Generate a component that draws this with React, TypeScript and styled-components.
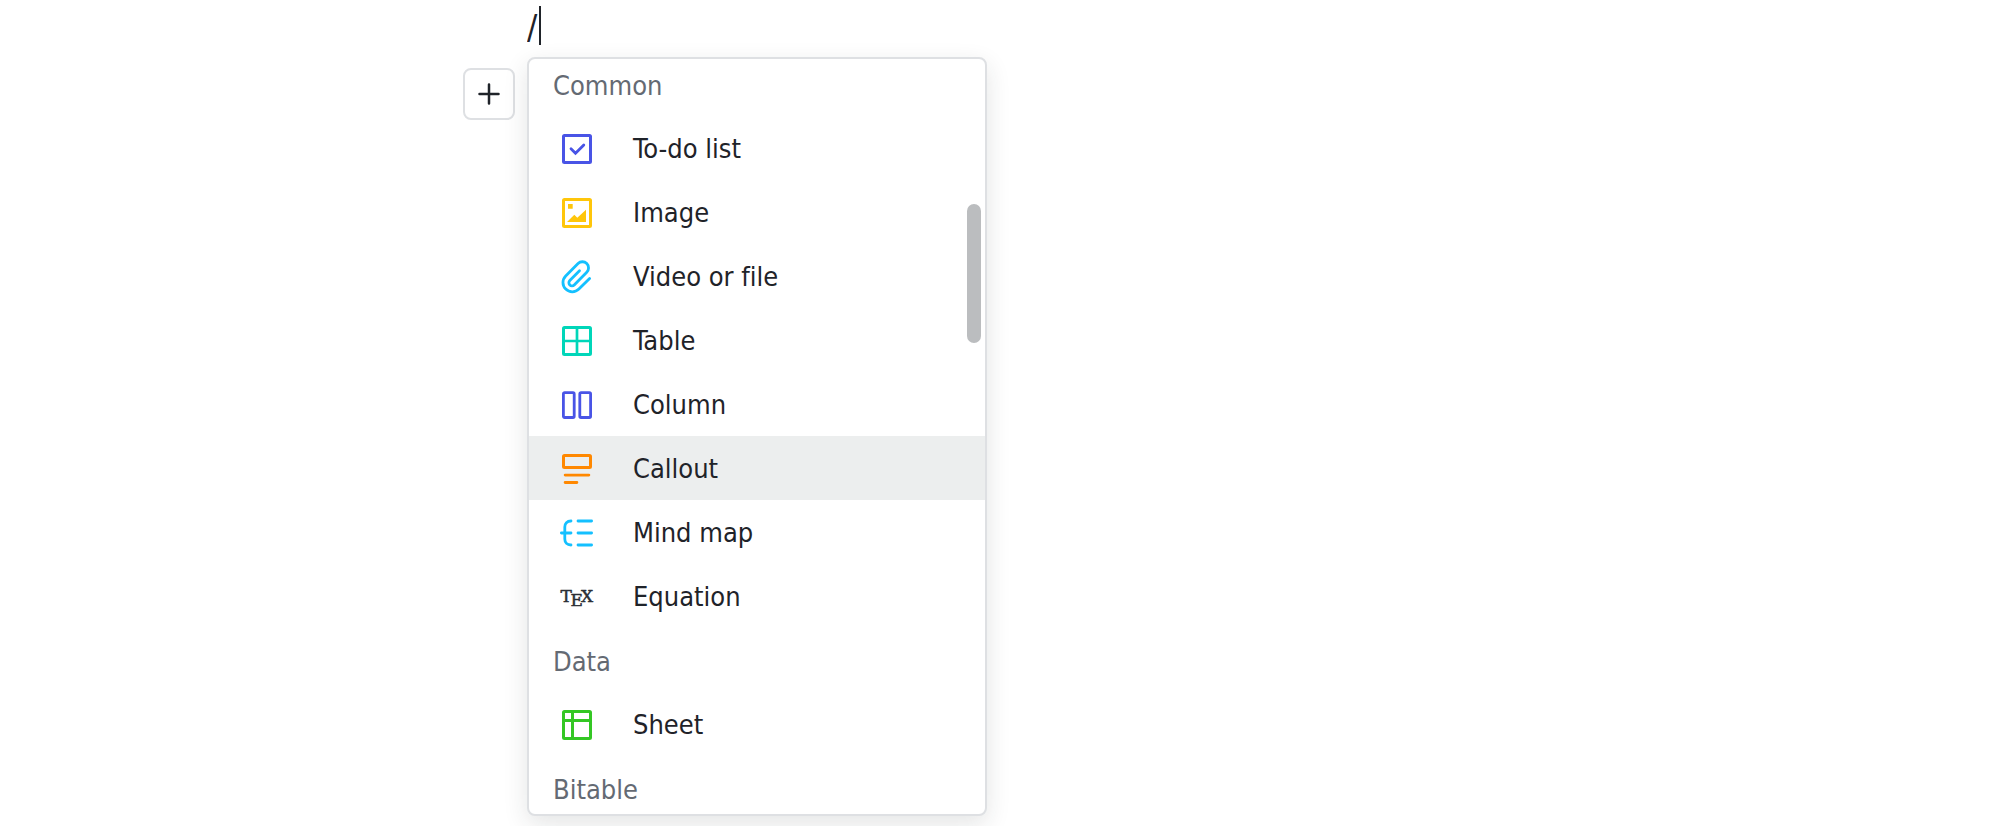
import React, { Fragment, type ReactNode } from 'react';
import styled, { createGlobalStyle } from 'styled-components';

const GlobalStyle = createGlobalStyle`
  *, *::before, *::after { box-sizing: border-box; }
  body {
    margin: 0;
    background: #fff;
    color: #1f2329;
    font-family: Tahoma, "DejaVu Sans Condensed", "Noto Sans", sans-serif;
    font-variant-ligatures: none;
  }
  button, input { font: inherit; color: inherit; }
`;

const Editor = styled.main`
  display: grid;
  grid-template-columns: 52px minmax(0, 1fr);
  column-gap: 12px;
  align-content: start;
  max-width: 1074px;
  min-height: 100vh;
  margin: 0 auto;
  padding-top: 6px;
`;

const Line = styled.div`
  grid-column: 2;
  display: flex;
  align-items: center;
  height: 39px;
  margin-bottom: 12px;
`;

const LineInput = styled.input`
  width: 12px;
  height: 39px;
  padding: 3px 0 0;
  border: 0;
  outline: 0;
  background: transparent;
  font-size: 34px;
  line-height: 36px;
  caret-color: transparent;
`;

const Caret = styled.span`
  width: 2px;
  height: 39px;
  background: #1f2329;
`;

const AddButton = styled.button`
  display: flex;
  align-items: center;
  justify-content: center;
  width: 52px;
  height: 52px;
  margin-top: 11px;
  padding: 0;
  border: 2px solid #dee0e3;
  border-radius: 8px;
  background: #fff;
`;

const Panel = styled.section`
  position: relative;
  width: 100%;
  max-width: 460px;
  height: calc(100vh - 67px);
  overflow: hidden;
  border: 2px solid #dee0e3;
  border-radius: 8px;
  background: #fff;
  box-shadow: 0 8px 24px rgba(31, 45, 41, 0.12);
`;

const List = styled.div`
  margin-top: -7px;
`;

const GroupTitle = styled.h2`
  height: 64px;
  margin: 0;
  padding: 2px 24px 0;
  color: #646a73;
  font-size: 27px;
  font-weight: 400;
  line-height: 64px;
`;

const Item = styled.button<{ $active?: boolean }>`
  display: flex;
  align-items: center;
  gap: 38px;
  width: 100%;
  height: 64px;
  padding: 2px 30px 0;
  border: 0;
  background: ${({ $active }) => ($active ? '#eceeee' : 'transparent')};
  font-size: 27px;
  line-height: 64px;
  text-align: left;
`;

const ScrollThumb = styled.div`
  position: absolute;
  top: 145px;
  right: 4px;
  width: 14px;
  height: 139px;
  border-radius: 7px;
  background: #bbbdbf;
`;

const Glyph = styled.svg`
  flex: none;
  width: 36px;
  height: 36px;
  fill: none;
  stroke: currentColor;
  stroke-width: 3;
  stroke-linecap: round;
  stroke-linejoin: round;
`;

const Icon = ({ color, children }: { color: string; children: ReactNode }) => (
  <Glyph viewBox="0 0 36 36" color={color} aria-hidden="true">
    {children}
  </Glyph>
);

const frame = <rect x="4.5" y="4.5" width="27" height="27" rx="1" />;

const icons = {
  todo: (
    <Icon color="#4954e6">
      {frame}
      <path d="M12 17.8l4.5 4.5 8.3-8.3" strokeLinejoin="miter" strokeWidth="2.8" />
    </Icon>
  ),
  image: (
    <Icon color="#ffc60a">
      {frame}
      <path d="M9 9h4.7v4.7H9zM8 27l7.3-7.3 3 3L27 14.8V27z" fill="currentColor" stroke="none" />
    </Icon>
  ),
  file: (
    <Icon color="#14c0ff">
      <path
        strokeWidth="2.8"
        d="M30.6 19.4L19.9 30.1A9.33 9.33 0 0 1 6.7 16.9L19.05 4.55A6.15 6.15 0 0 1 27.75 13.25L15.2 25.9A3.11 3.11 0 0 1 10.8 21.5L20.5 11.8"
      />
    </Icon>
  ),
  table: (
    <Icon color="#00d6b9">
      {frame}
      <path d="M18 5v26M5 18h26" strokeWidth="2.7" />
    </Icon>
  ),
  column: (
    <Icon color="#4954e6">
      <rect x="4.4" y="5.7" width="10.8" height="24.8" rx="1.2" strokeWidth="2.8" />
      <rect x="20.8" y="5.7" width="10.8" height="24.8" rx="1.2" strokeWidth="2.8" />
    </Icon>
  ),
  callout: (
    <Icon color="#ff8800">
      <rect x="4.5" y="4.5" width="27" height="12" rx="1" />
      <path d="M6.1 24.1h23.8M6.1 31.5h11.8" strokeWidth="2.8" />
    </Icon>
  ),
  mindmap: (
    <Icon color="#14c0ff">
      <path
        strokeWidth="2.8"
        d="M12 6C8 6 5.8 8.5 5.8 12v12c0 3.5 2.2 6 6.2 6M2.4 18H12M19 6h13.6M19 18h13.6M19 30h13.6"
      />
    </Icon>
  ),
  equation: (
    <Icon color="#2b2f36">
      <g fill="currentColor" strokeWidth="0.5" fontFamily="'DejaVu Serif', serif" fontSize="17">
        <text x="1.5" y="23">T</text>
        <text x="11.5" y="26.5">E</text>
        <text x="22" y="23">X</text>
      </g>
    </Icon>
  ),
  sheet: (
    <Icon color="#34c724">
      {frame}
      <path d="M13.5 5v26M5 13.5h26" />
    </Icon>
  ),
};

type Entry = { icon: keyof typeof icons; label: string };

const groups: { title: string; items: Entry[] }[] = [
  {
    title: 'Common',
    items: [
      { icon: 'todo', label: 'To-do list' },
      { icon: 'image', label: 'Image' },
      { icon: 'file', label: 'Video or file' },
      { icon: 'table', label: 'Table' },
      { icon: 'column', label: 'Column' },
      { icon: 'callout', label: 'Callout' },
      { icon: 'mindmap', label: 'Mind map' },
      { icon: 'equation', label: 'Equation' },
    ],
  },
  { title: 'Data', items: [{ icon: 'sheet', label: 'Sheet' }] },
  { title: 'Bitable', items: [] },
];

export default function App() {
  return (
    <>
      <GlobalStyle />
      <Editor>
        <Line>
          <LineInput aria-label="Command" defaultValue="/" />
          <Caret />
        </Line>
        <AddButton aria-label="Add block">
          <svg width="24" height="24" viewBox="0 0 24 24" stroke="#1f2329" strokeWidth="2.5" strokeLinecap="round" aria-hidden="true">
            <path d="M12 2.5v19M2.5 12h19" />
          </svg>
        </AddButton>
        <Panel aria-label="Insert block">
          <List>
            {groups.map((group) => (
              <Fragment key={group.title}>
                <GroupTitle>{group.title}</GroupTitle>
                {group.items.map((item) => (
                  <Item key={item.label} $active={item.label === 'Callout'}>
                    {icons[item.icon]}
                    {item.label}
                  </Item>
                ))}
              </Fragment>
            ))}
          </List>
          <ScrollThumb />
        </Panel>
      </Editor>
    </>
  );
}
